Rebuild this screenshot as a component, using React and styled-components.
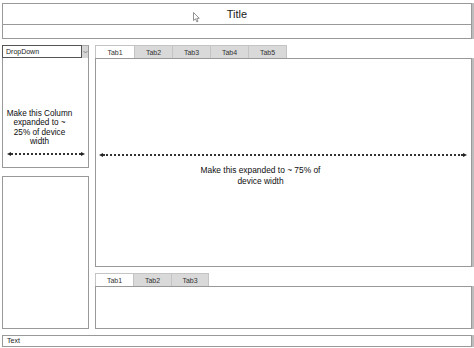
import React from "react";
import styled, {createGlobalStyle} from "styled-components";

const GlobalStyle = createGlobalStyle`
    html, body {
        margin: 0;
        padding: 0;
        background: #ffffff;
    }
    body {
        font-family: "Liberation Sans", Arial, sans-serif;
        color: #1a1a1a;
    }
    * {
        box-sizing: border-box;
    }
`;

const Page = styled.div`
    width: 474px;
    height: 348px;
    padding: 3px 2px 0 2px;
    display: flex;
    flex-direction: column;
`;

const Header = styled.header`
    border: 1px solid #999;
    box-shadow: 2px 0 0 #bdbdbd;
`;

const TitleBar = styled.div`
    position: relative;
    height: 20px;
    display: flex;
    align-items: center;
    justify-content: center;
    font-size: 11px;
`;

const SubBar = styled.div`
    height: 14px;
    border-top: 1px solid #999;
`;

const Cursor = styled.svg`
    position: absolute;
    left: 190px;
    top: 8px;
`;

const Body = styled.main`
    margin-top: 6px;
    display: grid;
    grid-template-columns: 87px 1fr;
    column-gap: 6px;
`;

const Column = styled.div`
    display: flex;
    flex-direction: column;
    gap: ${p => p.$gap}px;
`;

const Box = styled.div`
    height: ${p => p.$h}px;
    border: 1px solid #999;
    box-shadow: ${p => (p.$edge ? "2px 0 0 #bdbdbd" : "none")};
    display: flex;
    flex-direction: column;
`;

const DropRow = styled.div`
    display: flex;
    height: 13px;
    margin: -1px -1px 0 -1px;
`;

const Select = styled.div`
    flex: 1;
    border: 1px solid #555;
    font-size: 7px;
    line-height: 11px;
    padding-left: 3px;
`;

const Chevron = styled.div`
    width: 7px;
    background: #d6d6d6;
    border-top: 1px solid #aaa;
    border-right: 1px solid #999;
    display: flex;
    align-items: center;
    justify-content: center;
`;

const Note = styled.div`
    font-size: ${p => p.$size}px;
    line-height: ${p => p.$lh}px;
    text-align: center;
    color: #0d0d0d;
    padding: ${p => p.$pad};
`;

const Arrow = styled.div`
    display: flex;
    align-items: center;
    height: 5px;
    margin: ${p => p.$margin};

    &::before, &::after {
        content: "";
        width: 0;
        height: 0;
        border-top: 2.5px solid transparent;
        border-bottom: 2.5px solid transparent;
    }
    &::before {
        border-right: 4px solid #222;
    }
    &::after {
        border-left: 4px solid #222;
    }
`;

const Dots = styled.span`
    flex: 1;
    border-top: 2px dotted #333;
`;

const LeftFill = styled.div`
    flex: 1;
    display: flex;
    flex-direction: column;
    justify-content: flex-end;
    padding-bottom: 11px;
`;

const TabStrip = styled.div`
    display: flex;
    height: 13px;
`;

const Tab = styled.div`
    width: ${p => p.$w}px;
    height: 13px;
    font-size: 7px;
    line-height: 13px;
    text-align: center;
    color: #333;
    background: ${p => (p.$active ? "#ffffff" : "#d9d9d9")};
    border: 1px solid #c4c4c4;
    border-bottom: none;
    border-right: ${p => (p.$last ? "1px solid #c4c4c4" : "none")};
`;

const Panel = styled(Box)`
    border-top-color: #999;
`;

const MainFill = styled.div`
    padding-top: 93px;
`;

const Footer = styled.footer`
    margin-top: 6px;
    height: 12px;
    border: 1px solid #999;
    box-shadow: 2px 0 0 #bdbdbd;
    font-size: 7px;
    line-height: 10px;
    padding-left: 4px;
`;

const topTabs = ["Tab1", "Tab2", "Tab3", "Tab4", "Tab5"];
const bottomTabs = ["Tab1", "Tab2", "Tab3"];

function Tabs({labels, widths}) {
    return (
        <TabStrip>
            {labels.map((label, i) => (
                <Tab key={label} $w={widths[i]} $active={i === 0} $last={i === labels.length - 1}>
                    {label}
                </Tab>
            ))}
        </TabStrip>
    );
}

function App() {
    return (
        <Page>
            <GlobalStyle />
            <Header>
                <TitleBar>
                    Title
                    <Cursor width="7" height="11" viewBox="0 0 7 11">
                        <path d="M0.5 0.5 L0.5 8.5 L2.5 6.8 L3.8 9.8 L5 9.3 L3.8 6.4 L6.3 6.3 Z" fill="#fff" stroke="#777" strokeWidth="0.8" />
                    </Cursor>
                </TitleBar>
                <SubBar />
            </Header>

            <Body>
                <Column $gap={8}>
                    <Box $h={123}>
                        <DropRow>
                            <Select>DropDown</Select>
                            <Chevron>
                                <svg width="5" height="4" viewBox="0 0 5 4">
                                    <path d="M0.5 1 L2.5 3 L4.5 1" fill="none" stroke="#777" strokeWidth="0.8" />
                                </svg>
                            </Chevron>
                        </DropRow>
                        <LeftFill>
                            <Note $size={8.2} $lh={9.6} $pad="0 12px 4px 0">
                                Make this Column
                                <br />
                                expanded to ~
                                <br />
                                25% of device
                                <br />
                                width
                            </Note>
                            <Arrow $margin="0 3px 0 4px">
                                <Dots />
                            </Arrow>
                        </LeftFill>
                    </Box>
                    <Box $h={153} />
                </Column>

                <Column $gap={6}>
                    <div>
                        <Tabs labels={topTabs} widths={[39, 38, 38, 38, 39]} />
                        <Panel $h={209} $edge>
                            <MainFill>
                                <Arrow $margin="0 4px 0 3px">
                                    <Dots />
                                </Arrow>
                                <Note $size={8.4} $lh={10.8} $pad="8px 46px 0 0">
                                    Make this expanded to ~ 75% of
                                    <br />
                                    device width
                                </Note>
                            </MainFill>
                        </Panel>
                    </div>
                    <div>
                        <Tabs labels={bottomTabs} widths={[38, 38, 38]} />
                        <Panel $h={43} $edge />
                    </div>
                </Column>
            </Body>

            <Footer>Text</Footer>
        </Page>
    );
}

export default App;
